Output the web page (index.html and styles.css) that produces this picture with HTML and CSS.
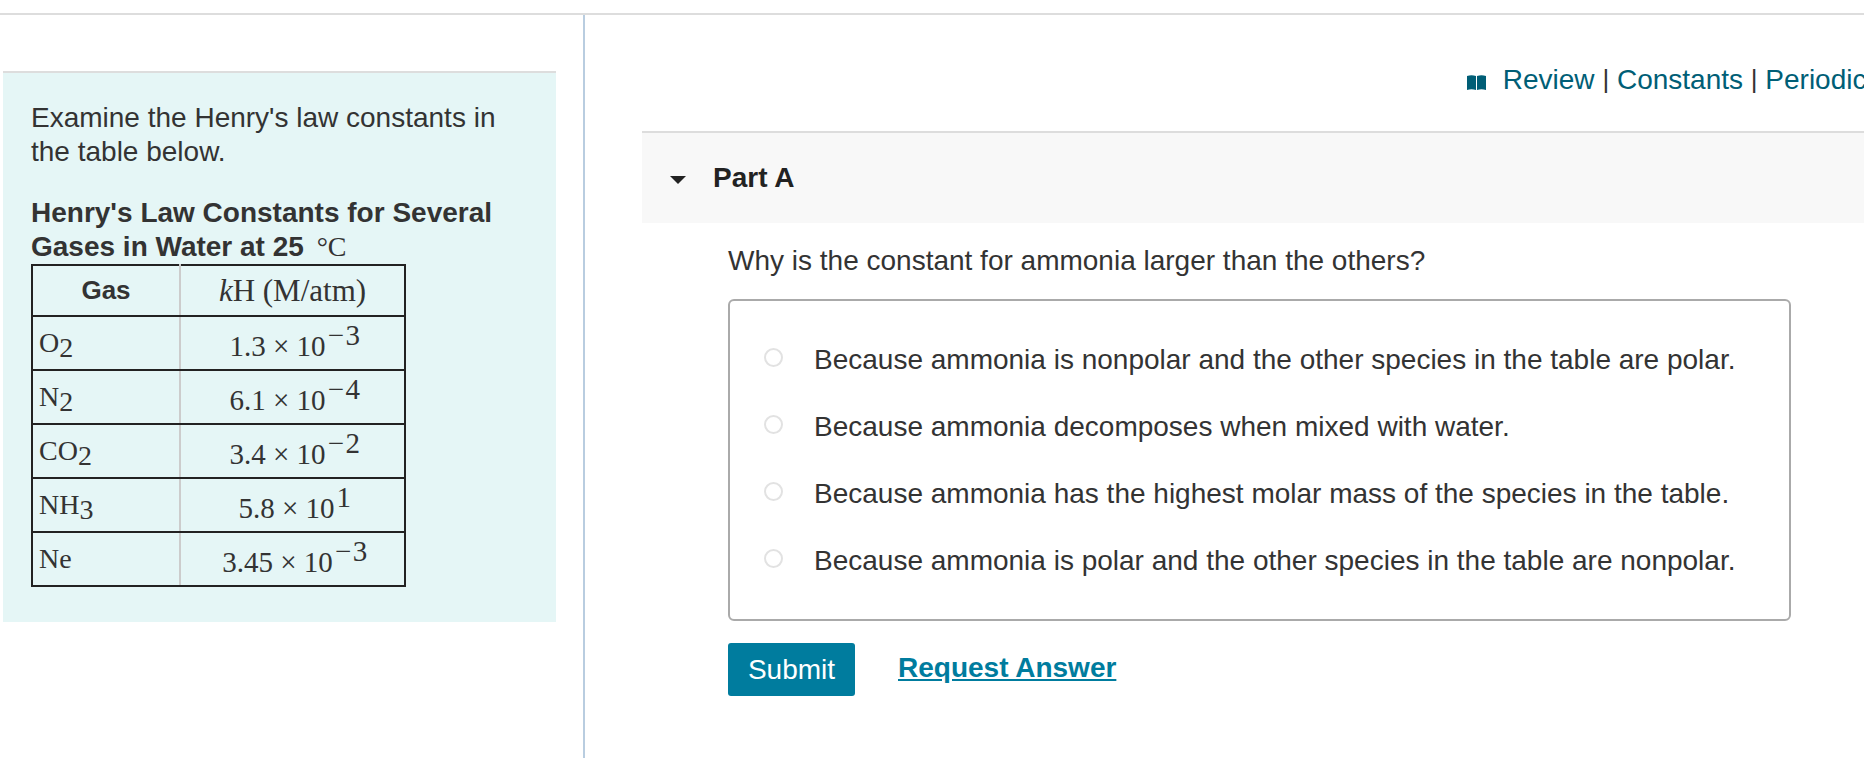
FILE: index.html
```html
<!DOCTYPE html>
<html lang="en">
<head>
  <meta charset="UTF-8">
  <title>Part A</title>
  <link rel="stylesheet" href="styles.css">
</head>
<body>
  <div class="page">
    <div class="left-col">
      <div class="intro">
        <p class="intro-text">Examine the Henry's law constants in the table below.</p>
        <p class="table-title">Henry's Law Constants for Several Gases in Water at 25 <span class="math">°C</span></p>
        <table class="constants">
          <tr class="head-row">
            <th class="col-gas">Gas</th>
            <th class="col-val math"><i>k</i>H (M/atm)</th>
          </tr>
          <tr>
            <td class="math">O<span class="sub">2</span></td>
            <td class="math val">1.3 × 10<span class="sup">−3</span></td>
          </tr>
          <tr>
            <td class="math">N<span class="sub">2</span></td>
            <td class="math val">6.1 × 10<span class="sup">−4</span></td>
          </tr>
          <tr>
            <td class="math">CO<span class="sub">2</span></td>
            <td class="math val">3.4 × 10<span class="sup">−2</span></td>
          </tr>
          <tr>
            <td class="math">NH<span class="sub">3</span></td>
            <td class="math val">5.8 × 10<span class="sup">1</span></td>
          </tr>
          <tr>
            <td class="math">Ne</td>
            <td class="math val">3.45 × 10<span class="sup">−3</span></td>
          </tr>
        </table>
      </div>
    </div>

    <div class="right-col">
      <div class="links">
        <svg class="book" width="19" height="15" viewBox="0 0 19 15"><path d="M0 1c3-1 6-1 9 0v14c-3-1-6-1-9 0zM10 1c3-1 6-1 9 0v14c-3-1-6-1-9 0z" fill="#005e76"/></svg>
        <a href="#">Review</a> <span class="sep">|</span> <a href="#">Constants</a> <span class="sep">|</span> <a href="#">Periodic Table</a>
      </div>

      <div class="part-head">
        <span class="caret"></span>
        <span class="part-title">Part A</span>
      </div>

      <div class="part-body">
        <p class="question">Why is the constant for ammonia larger than the others?</p>
        <div class="choices">
          <label class="choice"><span class="radio"></span>Because ammonia is nonpolar and the other species in the table are polar.</label>
          <label class="choice"><span class="radio"></span>Because ammonia decomposes when mixed with water.</label>
          <label class="choice"><span class="radio"></span>Because ammonia has the highest molar mass of the species in the table.</label>
          <label class="choice"><span class="radio"></span>Because ammonia is polar and the other species in the table are nonpolar.</label>
        </div>
        <div class="actions">
          <button class="submit">Submit</button>
          <a class="request" href="#">Request Answer</a>
        </div>
      </div>
    </div>
  </div>
</body>
</html>
```

FILE: styles.css
```css
html, body {
  margin: 0;
  height: 758px;
  overflow: hidden;
  background-color: #fff;
}

body {
  font-family: "Liberation Sans", Arial, sans-serif;
  color: #333;
  padding-top: 13px;
  box-sizing: border-box;
}

.page {
  display: flex;
  height: 745px;
  border-top: 2px solid #ddd;
}

.left-col {
  flex: 0 0 585px;
  box-sizing: border-box;
  border-right: 2px solid #b9cde0;
  padding: 56px 0 0 3px;
}

.right-col {
  flex: 1;
  min-width: 0;
  overflow: hidden;
}

.intro {
  width: 553px;
  height: 551px;
  box-sizing: border-box;
  background-color: #e5f6f6;
  border-top: 2px solid #ddd;
  padding: 24px 28px 0;
}

.intro-text {
  margin: 0;
  font-size: 28px;
  line-height: 34px;
  padding-top: 4px;
}

.table-title {
  margin: 27px 0 0;
  font-size: 28px;
  line-height: 34px;
  font-weight: bold;
}

.table-title .math {
  font-weight: normal;
  font-size: 28px;
  line-height: 28px;
  margin-left: 5px;
}

.math {
  font-family: "Liberation Serif", "Times New Roman", serif;
}

.constants {
  border-collapse: collapse;
  width: 375px;
  font-size: 28px;
}

.constants th,
.constants td {
  height: 54px;
  box-sizing: border-box;
  padding: 0 6px;
  border: 2px solid #ccc;
  border-top-color: #222;
  border-bottom-color: #222;
  text-align: left;
}

.constants th:first-child,
.constants td:first-child {
  border-left-color: #222;
}

.constants th:last-child,
.constants td:last-child {
  border-right-color: #222;
}

.constants .head-row th {
  height: 51px;
}

.constants .col-gas {
  width: 148px;
  text-align: center;
  font-size: 26px;
}

.constants .col-val {
  text-align: center;
  font-weight: normal;
  font-size: 31px;
}

.constants .val {
  text-align: center;
  font-size: 29px;
  padding: 7px 4px 0 10px;
}

.sub {
  position: relative;
  top: 5px;
}

.sup {
  position: relative;
  top: -11px;
  padding-left: 2px;
  letter-spacing: 1.5px;
}

.links {
  height: 116px;
  box-sizing: border-box;
  padding: 48px 0 0 882px;
  white-space: nowrap;
  font-size: 28px;
  line-height: 34px;
}

.links a {
  color: #005e76;
  text-decoration: none;
}

.sep {
  font-size: 26px;
  position: relative;
  top: -1px;
}

.book {
  margin-right: 9px;
  vertical-align: -1px;
}

.part-head {
  display: flex;
  align-items: center;
  margin-left: 57px;
  height: 92px;
  box-sizing: border-box;
  background-color: #f8f8f8;
  border-top: 2px solid #ddd;
}

.caret {
  width: 0;
  height: 0;
  margin: 3px 0 0 28px;
  border-left: 8px solid transparent;
  border-right: 8px solid transparent;
  border-top: 8px solid #222;
}

.part-title {
  margin-left: 27px;
  font-size: 28px;
  font-weight: bold;
  color: #222;
}

.part-body {
  margin-left: 143px;
  width: 1063px;
}

.question {
  margin: 0;
  padding-top: 21px;
  font-size: 28px;
  line-height: 34px;
}

.choices {
  margin-top: 21px;
  height: 322px;
  box-sizing: border-box;
  border: 2px solid #aaa;
  border-radius: 6px;
  padding: 25px 0 0;
}

.choice {
  display: flex;
  align-items: center;
  height: 67px;
  font-size: 28px;
  white-space: nowrap;
}

.radio {
  flex: none;
  width: 19px;
  height: 19px;
  box-sizing: border-box;
  margin: -5px 31px 0 34px;
  border: 2px solid #e2e2e2;
  border-radius: 50%;
  background-color: #fff;
}

.actions {
  display: flex;
  align-items: center;
  gap: 43px;
  margin-top: 22px;
}

.submit {
  width: 127px;
  height: 53px;
  background-color: #007c9e;
  color: #fff;
  border: none;
  border-radius: 3px;
  font-family: inherit;
  font-size: 28px;
  padding: 0;
}

.request {
  color: #007c9e;
  font-size: 28px;
  font-weight: bold;
  position: relative;
  top: -2px;
}
```
